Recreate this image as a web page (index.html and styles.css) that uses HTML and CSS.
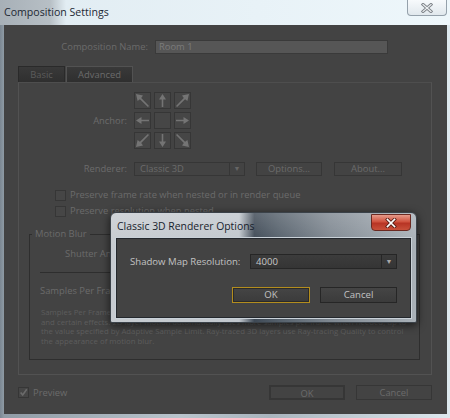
FILE: index.html
```html
<!DOCTYPE html>
<html lang="en">
<head>
    <meta charset="UTF-8">
    <meta name="viewport" content="width=device-width, initial-scale=1.0">
    <title>Composition Settings</title>
    <link rel="stylesheet" href="styles.css">
</head>
<body>

<div class="window">
    <!-- Title Bar -->
    <div class="titlebar">
        <span class="title">Composition Settings</span>
        <div class="win-close">
            <svg width="12" height="10" viewBox="0 0 12 10">
                <path d="M2 1.5 L10 8.5 M10 1.5 L2 8.5" stroke="#7d8288" stroke-width="3" stroke-linecap="square"/>
                <path d="M2 1.5 L10 8.5 M10 1.5 L2 8.5" stroke="#eef1f3" stroke-width="1.2" stroke-linecap="square"/>
            </svg>
        </div>
    </div>

    <div class="content">
        <div class="name-row">
            <span class="name-label">Composition Name:</span>
            <div class="name-input">Room 1</div>
        </div>

        <div class="tabs">
            <div class="tab">Basic</div>
            <div class="tab active">Advanced</div>
        </div>

        <div class="panel">
            <!-- Anchor -->
            <div class="row anchor-row">
                <span class="row-label">Anchor:</span>
                <div class="anchor-grid">
                    <div class="cell"><svg viewBox="0 0 15 15"><path d="M1 1 L8 2.6 L6.2 4.9 L14 12.9 L12.9 14 L4.9 6.2 L2.6 8 Z"/></svg></div>
                    <div class="cell"><svg viewBox="0 0 15 15"><path d="M7.5 1 L11 6.5 L8.3 6.5 L8.3 14 L6.7 14 L6.7 6.5 L4 6.5 Z"/></svg></div>
                    <div class="cell"><svg class="r90" viewBox="0 0 15 15"><path d="M1 1 L8 2.6 L6.2 4.9 L14 12.9 L12.9 14 L4.9 6.2 L2.6 8 Z"/></svg></div>
                    <div class="cell"><svg class="r270" viewBox="0 0 15 15"><path d="M7.5 1 L11 6.5 L8.3 6.5 L8.3 14 L6.7 14 L6.7 6.5 L4 6.5 Z"/></svg></div>
                    <div class="cell"></div>
                    <div class="cell"><svg class="r90" viewBox="0 0 15 15"><path d="M7.5 1 L11 6.5 L8.3 6.5 L8.3 14 L6.7 14 L6.7 6.5 L4 6.5 Z"/></svg></div>
                    <div class="cell"><svg class="r270" viewBox="0 0 15 15"><path d="M1 1 L8 2.6 L6.2 4.9 L14 12.9 L12.9 14 L4.9 6.2 L2.6 8 Z"/></svg></div>
                    <div class="cell"><svg class="r180" viewBox="0 0 15 15"><path d="M7.5 1 L11 6.5 L8.3 6.5 L8.3 14 L6.7 14 L6.7 6.5 L4 6.5 Z"/></svg></div>
                    <div class="cell"><svg class="r180" viewBox="0 0 15 15"><path d="M1 1 L8 2.6 L6.2 4.9 L14 12.9 L12.9 14 L4.9 6.2 L2.6 8 Z"/></svg></div>
                </div>
            </div>

            <!-- Renderer -->
            <div class="row renderer-row">
                <span class="row-label">Renderer:</span>
                <div class="select renderer-select">
                    <span class="select-text">Classic 3D</span>
                    <span class="select-arrow">&#9660;</span>
                </div>
                <div class="btn options-btn">Options...</div>
                <div class="btn about-btn">About...</div>
            </div>

            <div class="check-row first"><span class="checkbox"></span>Preserve frame rate when nested or in render queue</div>
            <div class="check-row"><span class="checkbox"></span>Preserve resolution when nested</div>

            <!-- Motion Blur Group -->
            <fieldset class="group">
                <legend>Motion Blur</legend>
                <div class="shutter">Shutter Angle:</div>
                <div class="sep"></div>
                <div class="samples">Samples Per Frame:</div>
                <p class="note">
                    Samples Per Frame: sets the minimum number of samples for 3D layers, shape layers,<br>
                    and certain effects. 2D layer motion automatically uses more samples per frame when needed, up to<br>
                    the value specified by Adaptive Sample Limit. Ray-traced 3D layers use Ray-tracing Quality to control<br>
                    the appearance of motion blur.
                </p>
            </fieldset>
        </div>

        <!-- Footer -->
        <div class="footer">
            <div class="preview">
                <span class="checkbox">
                    <svg width="11" height="11" viewBox="0 0 11 11"><path d="M2 5.5 L4.5 8.5 L9.5 1.5" fill="none" stroke="#6b6b6b" stroke-width="2"/></svg>
                </span>
                Preview
            </div>
            <div class="footer-buttons">
                <div class="btn default-btn">OK</div>
                <div class="btn cancel-btn">Cancel</div>
            </div>
        </div>
    </div>

    <!-- Classic 3D Renderer Options dialog -->
    <div class="modal">
        <div class="modal-title">
            <span>Classic 3D Renderer Options</span>
            <div class="modal-close">
                <svg width="12" height="10" viewBox="0 0 12 10">
                    <path d="M2.5 1.5 L9.5 8.5 M9.5 1.5 L2.5 8.5" stroke="#5a1f17" stroke-width="3.4" stroke-linecap="square"/>
                    <path d="M2.5 1.5 L9.5 8.5 M9.5 1.5 L2.5 8.5" stroke="#ffffff" stroke-width="1.7" stroke-linecap="square"/>
                </svg>
            </div>
        </div>
        <div class="modal-body">
            <div class="modal-row">
                <span class="modal-label">Shadow Map Resolution:</span>
                <div class="select dark-select">
                    <span class="select-text">4000</span>
                    <span class="select-arrow">&#9660;</span>
                </div>
            </div>
            <div class="modal-buttons">
                <div class="btn dark-btn focused">OK</div>
                <div class="btn dark-btn">Cancel</div>
            </div>
        </div>
    </div>
</div>

</body>
</html>
```

FILE: styles.css
```css
/* Basic Reset */
* {
    box-sizing: border-box;
    margin: 0;
    padding: 0;
}

body {
    width: 450px;
    height: 418px;
    overflow: hidden;
    font-family: "Open Sans", sans-serif;
    font-size: 9.4px;
    line-height: 14px;
    color: #6b6b6b;
}

/* Outer Window Frame */
.window {
    position: relative;
    width: 450px;
    height: 418px;
    background: linear-gradient(to right, #7b8792 0, #8f9ba5 4px, #b9c4cc 40%, #a9b4bd 60%, #dde8ee 100%);
}

.titlebar {
    height: 25px;
    display: flex;
    justify-content: space-between;
    align-items: flex-start;
    background: linear-gradient(to right, #a7b0b7 0, #b7bfc5 50px, #e2edf3 66px, #eef7fb 100%);
}

.title {
    padding: 5px 0 0 4px;
    font-size: 10.6px;
    white-space: nowrap;
    color: #1d2833;
}

.win-close {
    width: 40px;
    height: 16px;
    margin-right: 3px;
    display: flex;
    align-items: center;
    justify-content: center;
    border: 1px solid #95a1ab;
    border-top: none;
    border-radius: 0 0 4px 4px;
    background: linear-gradient(#f7fafc, #e1e8ed);
}

/* Dark Content */
.content {
    height: 389px;
    margin: 0 3px 0 4px;
    background-color: #434343;
    display: flex;
    flex-direction: column;
}

.name-row {
    display: flex;
    align-items: center;
    margin-top: 15px;
    height: 14px;
}

.name-label {
    width: 144px;
    text-align: right;
    white-space: nowrap;
}

.name-input {
    width: 233px;
    height: 14px;
    margin-left: 7px;
    padding-left: 3px;
    line-height: 12px;
    background-color: #565656;
    border: 1px solid #3a3a3a;
    color: #7b7b7b;
}

/* Tabs */
.tabs {
    display: flex;
    margin: 12px 0 0 14px;
    height: 16px;
}

.tab {
    width: 47px;
    height: 16px;
    line-height: 15px;
    text-align: center;
    background: linear-gradient(#393939, #2f2f2f);
    border: 1px solid #2a2a2a;
    border-bottom: none;
    color: #5c5c5c;
}

.tab.active {
    width: 67px;
    margin-left: 1px;
    background-color: #444;
    border-color: #525252;
    color: #6b6b6b;
}

.panel {
    width: 414px;
    height: 293px;
    margin-left: 14px;
    border: 1px solid #525252;
    border-top-color: #4e4e4e;
    padding-top: 9px;
}

.row {
    display: flex;
    align-items: center;
}

.row-label {
    width: 108px;
    margin-right: 7px;
    text-align: right;
}

/* Anchor Grid */
.anchor-grid {
    display: grid;
    grid-template-columns: repeat(3, 17px);
    grid-template-rows: repeat(3, 17px);
    gap: 3px;
}

.cell {
    border: 1px solid #363636;
    background-color: #464646;
}

.cell svg {
    display: block;
    width: 15px;
    height: 15px;
    fill: #747474;
}

.r90 { transform: rotate(90deg); }
.r180 { transform: rotate(180deg); }
.r270 { transform: rotate(270deg); }

/* Renderer Row */
.renderer-row {
    margin-top: 13px;
    height: 14px;
}

.select {
    display: flex;
    height: 14px;
    border: 1px solid #363636;
    line-height: 12px;
}

.select-text {
    flex: 1;
    padding-left: 5px;
}

.select-arrow {
    width: 15px;
    border-left: 1px solid #363636;
    text-align: center;
    font-size: 7px;
    color: #666;
}

.renderer-select {
    width: 111px;
}

.btn {
    height: 14px;
    border: 1px solid #363636;
    text-align: center;
    line-height: 12px;
}

.options-btn {
    width: 66px;
    margin-left: 11px;
}

.about-btn {
    width: 68px;
    margin-left: 12px;
}

/* Checkboxes */
.check-row {
    display: flex;
    align-items: center;
    height: 14px;
    margin: 2px 0 0 36px;
    white-space: nowrap;
}

.check-row.first {
    margin-top: 12px;
}

.checkbox {
    width: 11px;
    height: 11px;
    margin-right: 4px;
    border: 1px solid #363636;
    background-color: #464646;
    display: flex;
    align-items: center;
    justify-content: center;
}

/* Motion Blur Group */
.group {
    margin: 9px 11px 0 10px;
    padding: 0 0 13px 0;
    border: 1px solid #2e2e2e;
    min-width: 0;
}

.group legend {
    margin-left: 2px;
    padding: 0 3px;
}

.shutter {
    margin: 6px 0 0 35px;
}

.sep {
    height: 1px;
    margin: 11px 11px 0 10px;
    background-color: #2e2e2e;
}

.samples {
    margin: 11px 0 0 10px;
}

.note {
    margin: 10px 0 0 11px;
    font-size: 7.8px;
    line-height: 9.5px;
    white-space: nowrap;
    color: #5d5d5d;
}

/* Footer */
.footer {
    display: flex;
    justify-content: space-between;
    align-items: center;
    margin: 10px 15px 0 14px;
    height: 15px;
}

.preview {
    display: flex;
    align-items: center;
}

.footer-buttons {
    display: flex;
    gap: 11px;
}

.footer-buttons .btn {
    width: 76px;
    height: 15px;
    line-height: 13px;
}

.default-btn {
    border: 2px solid #363636;
    width: 77px;
}

/* Renderer Options Dialog */
.modal {
    position: absolute;
    left: 110px;
    top: 212px;
    width: 307px;
    height: 111px;
    padding: 0 5px 4px 5px;
    border: 1px solid #3b4249;
    border-radius: 6px 6px 2px 2px;
    background:
        linear-gradient(rgba(255, 255, 255, 0.18), rgba(255, 255, 255, 0) 30%),
        linear-gradient(to right, #c6cbd0 0%, #c1c7cd 42%, #3e4955 47%, #55606b 55%, #7f8891 72%, #a9b1b8 100%);
    box-shadow: 0 2px 8px rgba(0, 0, 0, 0.65);
}

.modal-title {
    height: 25px;
    display: flex;
    justify-content: space-between;
    align-items: flex-start;
    font-size: 10.4px;
    color: #18222c;
    white-space: nowrap;
}

.modal-title span {
    padding: 6px 0 0 1px;
}

.modal-close {
    width: 40px;
    height: 17px;
    margin-top: 1px;
    display: flex;
    align-items: center;
    justify-content: center;
    border: 1px solid #6b2a22;
    border-radius: 0 0 4px 4px;
    background: linear-gradient(#e59a8a, #d0523e 45%, #b73424 55%, #c8503a);
}

.modal-body {
    height: 80px;
    padding: 15px 13px 0 13px;
    background-color: #434343;
    border: 1px solid #24282d;
    box-shadow: 0 0 0 1px #c9d1d8;
    font-size: 9.6px;
    color: #c2c2c2;
}

.modal-row {
    display: flex;
    align-items: center;
}

.modal-label {
    width: 120px;
    white-space: nowrap;
}

.dark-select {
    width: 147px;
    height: 15px;
    line-height: 13px;
    background: linear-gradient(#3c3c3c, #353535);
    border-color: #262626;
    color: #c8c8c8;
}

.dark-select .select-arrow {
    border-left-color: #262626;
    color: #a8a8a8;
}

.modal-buttons {
    display: flex;
    justify-content: flex-end;
    gap: 10px;
    margin-top: 18px;
}

.dark-btn {
    width: 77px;
    height: 16px;
    line-height: 14px;
    background: linear-gradient(#454545, #3b3b3b);
    border-color: #262626;
    color: #c2c2c2;
}

.dark-btn.focused {
    width: 78px;
    border-color: #b38d1e;
    box-shadow: inset 0 0 0 1px #2a2a2a;
}
```
